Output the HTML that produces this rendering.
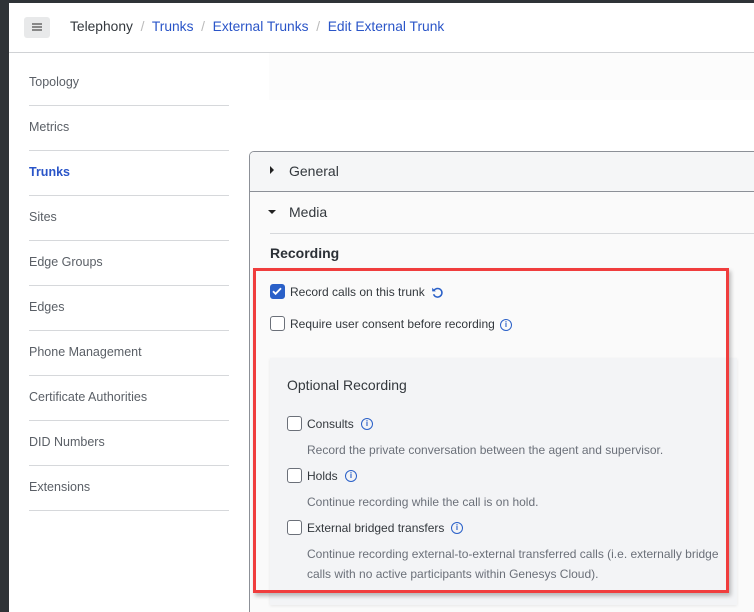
<!DOCTYPE html><html><head><style>
*{box-sizing:border-box;margin:0;padding:0}
html,body{width:754px;height:612px;overflow:hidden}
body{background:#2f3337;font-family:"Liberation Sans",sans-serif;position:relative}
.page{position:absolute;left:9px;top:3px;right:0;bottom:0;background:#fff}
.a{position:absolute;white-space:nowrap}
.nav{font-size:12.5px;color:#5a5f66;left:29px}
.ln{position:absolute;left:29px;width:200px;height:1px;background:#d6d8db}
.cb{position:absolute;width:15px;height:15px;border:1.6px solid #6b7079;border-radius:3px;background:#fff}
.t{font-size:12px;color:#33383d}
.d{font-size:12px;color:#6b7079}
.i{position:absolute;width:12px;height:12px;border:1.3px solid #2a60c8;border-radius:50%;color:#2a60c8;font-size:8px;font-weight:bold;text-align:center;line-height:10px}
</style></head><body>
<div class="page"></div>
<div class="a" style="left:24px;top:17px;width:26px;height:21px;background:#e8e9ea;border-radius:3px"></div>
<div class="a" style="left:32px;top:23px;width:10px;height:1.6px;background:#888;box-shadow:0 3px 0 #888,0 6px 0 #888"></div>
<div class="a" style="left:70px;top:19px;font-size:13.8px;color:#33383d">Telephony <span style="color:#bbb">&nbsp;/&nbsp;</span> <span style="color:#2a55c8">Trunks</span> <span style="color:#bbb">&nbsp;/&nbsp;</span> <span style="color:#2a55c8">External Trunks</span> <span style="color:#bbb">&nbsp;/&nbsp;</span> <span style="color:#2a55c8">Edit External Trunk</span></div>
<div class="a" style="left:9px;top:52px;right:0;height:1px;background:#d0d2d5"></div>
<div class="a" style="left:269px;top:53px;right:0;height:47px;background:#fcfcfc"></div>
<div class="a nav" style="top:75px">Topology</div><div class="ln" style="top:105px"></div>
<div class="a nav" style="top:120px">Metrics</div><div class="ln" style="top:150px"></div>
<div class="a nav" style="top:165px;color:#2a55c8;font-weight:bold">Trunks</div><div class="ln" style="top:195px"></div>
<div class="a nav" style="top:210px">Sites</div><div class="ln" style="top:240px"></div>
<div class="a nav" style="top:255px">Edge Groups</div><div class="ln" style="top:285px"></div>
<div class="a nav" style="top:300px">Edges</div><div class="ln" style="top:330px"></div>
<div class="a nav" style="top:345px">Phone Management</div><div class="ln" style="top:375px"></div>
<div class="a nav" style="top:390px">Certificate Authorities</div><div class="ln" style="top:420px"></div>
<div class="a nav" style="top:435px">DID Numbers</div><div class="ln" style="top:465px"></div>
<div class="a nav" style="top:480px">Extensions</div><div class="ln" style="top:510px"></div>
<div class="a" style="left:249px;top:151px;width:505px;height:461px;border:1px solid #8c9097;border-right:none;border-bottom:none;border-radius:5px 0 0 0;background:#fafafa"></div>
<div class="a" style="left:250px;top:152px;width:504px;height:40px;background:#f5f6f7;border-bottom:1px solid #8c9097;border-radius:4px 0 0 0"></div>
<div class="a" style="left:270px;top:166px;width:0;height:0;border-left:4px solid #222;border-top:4px solid transparent;border-bottom:4px solid transparent"></div>
<div class="a" style="left:289px;top:163px;font-size:14px;color:#33383d">General</div>
<div class="a" style="left:268px;top:210px;width:0;height:0;border-top:4px solid #222;border-left:4px solid transparent;border-right:4px solid transparent"></div>
<div class="a" style="left:289px;top:204px;font-size:14px;color:#33383d">Media</div>
<div class="a" style="left:270px;top:233px;right:0;height:1px;background:#d6d8db"></div>
<div class="a" style="left:270px;top:245px;font-size:14px;font-weight:bold;color:#2b3036">Recording</div>
<div class="a" style="left:270px;top:358px;width:467px;height:247px;background:#f3f4f6;box-shadow:0 1px 3px rgba(0,0,0,.08)"></div>
<div class="cb" style="left:270px;top:284px;background:#2a60c8;border-color:#2a60c8"><svg width="12" height="12" viewBox="0 0 12 12" style="position:absolute;left:0;top:0"><path d="M2 6.2l2.6 2.6L10 3.3" stroke="#fff" stroke-width="1.8" fill="none"/></svg></div>
<div class="a t" style="left:290px;top:285px">Record calls on this trunk</div>
<svg class="a" style="left:431px;top:286px" width="13" height="13" viewBox="0 0 13 13"><path d="M3.2 4.2A4.3 4.3 0 1 1 2.6 8.2" stroke="#2a60c8" stroke-width="1.5" fill="none"/><path d="M1.2 1.8v3.6h3.6z" fill="#2a60c8"/></svg>
<div class="cb" style="left:270px;top:316px"></div>
<div class="a t" style="left:290px;top:317px">Require user consent before recording</div>
<div class="i" style="left:500px;top:319px">i</div>
<div class="a" style="left:287px;top:377px;font-size:14px;color:#33383d">Optional Recording</div>
<div class="cb" style="left:287px;top:416px"></div><div class="a t" style="left:307px;top:417px">Consults</div><div class="i" style="left:361px;top:418px">i</div>
<div class="a d" style="left:307px;top:443px">Record the private conversation between the agent and supervisor.</div>
<div class="cb" style="left:287px;top:468px"></div><div class="a t" style="left:307px;top:469px">Holds</div><div class="i" style="left:345px;top:470px">i</div>
<div class="a d" style="left:307px;top:495px">Continue recording while the call is on hold.</div>
<div class="cb" style="left:287px;top:520px"></div><div class="a t" style="left:307px;top:521px">External bridged transfers</div><div class="i" style="left:451px;top:522px">i</div>
<div class="a d" style="left:307px;top:547px">Continue recording external-to-external transferred calls (i.e. externally bridge</div>
<div class="a d" style="left:307px;top:567px">calls with no active participants within Genesys Cloud).</div>
<div class="a" style="left:253px;top:268px;width:476px;height:325px;border:3px solid #f03d3d;box-shadow:2px 3px 4px rgba(0,0,0,.25)"></div>
</body></html>
